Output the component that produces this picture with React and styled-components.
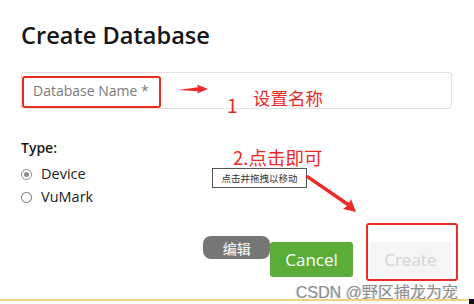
import styled, { createGlobalStyle } from "styled-components";

const GlobalStyle = createGlobalStyle`
  html, body {
    margin: 0;
    padding: 0;
    background: #fff;
  }
  body {
    font-family: "Open Sans", "Noto Sans CJK SC", sans-serif;
  }
`;

const RED = "#ec2a26";

const Page = styled.div`
  position: relative;
  width: 474px;
  height: 304px;
  overflow: hidden;
  padding: 20px 22px 0 21px;
  box-sizing: border-box;
  display: flex;
  flex-direction: column;
`;

const Title = styled.h1`
  margin: 0;
  font-size: 23.6px;
  line-height: 30px;
  font-weight: 600;
  color: #161616;
`;

const InputBox = styled.div`
  position: relative;
  margin-top: 22px;
  height: 37px;
  width: 431px;
  box-sizing: border-box;
  border: 1px solid #e2e2e2;
  border-radius: 3px;
  display: flex;
  align-items: center;
  padding-left: 11px;
  font-size: 14px;
  color: #7a7a7a;
`;

const Highlight = styled.div`
  position: absolute;
  border: 2px solid ${RED};
  border-radius: 3px;
  box-sizing: border-box;
  left: ${(p) => p.$x}px;
  top: ${(p) => p.$y}px;
  width: ${(p) => p.$w}px;
  height: ${(p) => p.$h}px;
  pointer-events: none;
`;

const Note = styled.span`
  position: absolute;
  left: ${(p) => p.$x}px;
  top: ${(p) => p.$y}px;
  font-family: "Noto Sans CJK SC", "Liberation Sans", sans-serif;
  font-size: ${(p) => p.$size}px;
  line-height: 1;
  color: ${RED};
  white-space: nowrap;
`;

const Arrow = styled.svg`
  position: absolute;
  left: ${(p) => p.$x}px;
  top: ${(p) => p.$y}px;
  overflow: visible;
`;

const TypeLabel = styled.div`
  margin-top: 30px;
  font-size: 14px;
  font-weight: 600;
  color: #1a1a1a;
  line-height: 18px;
`;

const RadioList = styled.div`
  margin-top: 7px;
  display: flex;
  flex-direction: column;
  gap: 3px;
`;

const RadioRow = styled.label`
  display: flex;
  align-items: center;
  gap: 9px;
  font-size: 14.5px;
  color: #222;
  line-height: 20px;
`;

const RadioDot = styled.span`
  width: 11px;
  height: 11px;
  border-radius: 50%;
  box-sizing: border-box;
  border: 1px solid ${(p) => (p.$on ? "#8a8a8a" : "#6f6f6f")};
  display: flex;
  align-items: center;
  justify-content: center;
  &::after {
    content: "";
    width: 5px;
    height: 5px;
    border-radius: 50%;
    background: ${(p) => (p.$on ? "#8a8a8a" : "transparent")};
  }
`;

const Tip = styled.div`
  position: absolute;
  left: 212px;
  top: 168px;
  width: 95px;
  height: 20px;
  box-sizing: border-box;
  border: 1px solid #555;
  background: #fff;
  font-family: "Noto Sans CJK SC", sans-serif;
  font-size: 9.5px;
  color: #333;
  display: flex;
  align-items: center;
  justify-content: center;
`;

const ButtonRow = styled.div`
  position: relative;
  margin-top: 29px;
  margin-left: 182px;
  display: flex;
  align-items: flex-start;
`;

const EditTag = styled.div`
  width: 68px;
  height: 23px;
  border-radius: 8px;
  background: #767676;
  color: #fff;
  font-family: "Noto Sans CJK SC", sans-serif;
  font-size: 14px;
  display: flex;
  align-items: center;
  justify-content: center;
  line-height: 1;
`;

const Button = styled.button`
  margin-top: 6px;
  margin-left: ${(p) => p.$gap || 0}px;
  width: ${(p) => p.$w}px;
  height: 35px;
  border: none;
  border-radius: 3px;
  font-family: "Open Sans", sans-serif;
  font-size: 17px;
  padding: 0;
  background: ${(p) => (p.$primary ? "#5aae38" : "#f5f5f5")};
  color: ${(p) => (p.$primary ? "#fff" : "#d3d3d3")};
`;

const Watermark = styled.span`
  position: absolute;
  left: 296px;
  top: 279px;
  font-family: "Liberation Sans", "Noto Sans CJK SC", sans-serif;
  font-size: 16px;
  color: #8d8d8d;
  text-shadow: 1px 1px 0 #fff, -1px 0 0 #d8d8d8;
  white-space: nowrap;
`;

const BottomLine = styled.div`
  position: absolute;
  left: 0;
  top: 299px;
  width: 468px;
  height: 2px;
  background: #f2d27d;
`;

const Corner = styled.div`
  position: absolute;
  left: 469px;
  top: 299px;
  width: 5px;
  height: 5px;
  background: #111;
`;

export default function App() {
  return (
    <>
      <GlobalStyle />
      <Page>
        <Title>Create Database</Title>
        <InputBox>
          Database Name *
          <Highlight $x={0} $y={3} $w={139} $h={32} />
        </InputBox>
        <TypeLabel>Type:</TypeLabel>
        <RadioList>
          <RadioRow>
            <RadioDot $on />
            Device
          </RadioRow>
          <RadioRow>
            <RadioDot />
            VuMark
          </RadioRow>
        </RadioList>
        <ButtonRow>
          <EditTag>编辑</EditTag>
          <Button $primary $w={83}>Cancel</Button>
          <Button $gap={16} $w={84}>Create</Button>
        </ButtonRow>

        <Arrow $x={178} $y={84} width="31" height="10">
          <path d="M0 6 L20 3.2 L19 0.5 L30 5 L19 9.5 L20 7.2 Z" fill={RED} />
        </Arrow>
        <Note $x={227} $y={95} $size={19}>1</Note>
        <Note $x={253} $y={89} $size={17.5}>设置名称</Note>
        <Note $x={233} $y={148} $size={18.5}>2.点击即可</Note>
        <Tip>点击并拖拽以移动</Tip>
        <Arrow $x={305} $y={175} width="52" height="40">
          <path d="M0 2 L3 0 L44 28 L46 24 L51 37 L38 34 L42 31 Z" fill={RED} />
        </Arrow>
        <Highlight $x={366} $y={223} $w={92} $h={58} />
        <Watermark>CSDN @野区捕龙为宠</Watermark>
        <BottomLine />
        <Corner />
      </Page>
    </>
  );
}
